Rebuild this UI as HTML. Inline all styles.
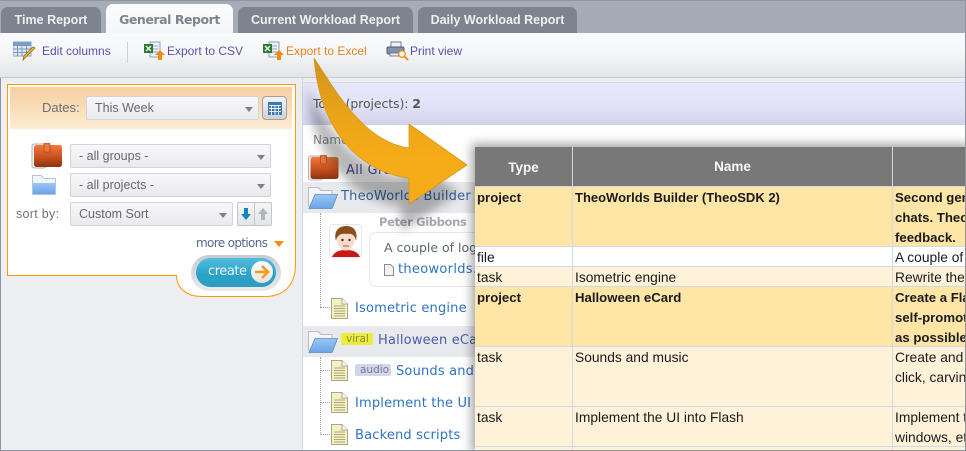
<!DOCTYPE html>
<html><head><meta charset="utf-8"><title>Report</title>
<style>
html,body{margin:0;padding:0}
body{width:966px;height:451px;overflow:hidden;position:relative;background:#eceef2;font-family:"Liberation Sans",sans-serif}
div,span.t,svg{position:absolute}
.t{position:absolute;white-space:nowrap;line-height:16px}
.tab{position:absolute;background:#7d838f;border-radius:7px 7px 0 0;top:7px;height:26px;color:#eef0f2;font:bold 12.5px/26px "Liberation Sans",sans-serif;text-align:center}
.sel{position:absolute;background:linear-gradient(#f8f8fa,#e9eaed);border:1px solid #d2d3d6;border-radius:2px;color:#66666e;font:12.5px/23px "Liberation Sans",sans-serif;box-sizing:border-box;height:24px;padding-left:8px}
.sel:after{content:"";position:absolute;right:5px;top:10px;border:4px solid transparent;border-top:5px solid #808084;border-bottom:0}
.tb{font-size:12px;color:#5a50ac}
.tr{font:13px/16px "DejaVu Sans",sans-serif;color:#2f73c0;letter-spacing:.18px}
.cell{position:absolute;font:13.8px/20px "Liberation Sans",sans-serif;color:#1a1a1a;white-space:nowrap;overflow:hidden;padding-top:1px;box-sizing:border-box}
.b{font-weight:bold;font-size:13.2px}
.c1{left:475px;width:97px;padding-left:2px}
.c2{left:573px;width:319px;padding-left:2px}
.c3{left:893px;width:72px;padding-left:2px}
.y{background:#ffe6a6}
.o{background:#fff2d9}
.w{background:#fff}
.dot{position:absolute;border-left:1px dotted #a0a0a0}
.doth{position:absolute;border-top:1px dotted #a0a0a0;height:0}
</style></head><body>

<!-- tab bar -->
<div style="left:0;top:0;width:966px;height:33px;background:#a5abb7;border-top:1px solid #8e94a0;box-sizing:border-box"></div>
<div class="tab" style="left:1px;width:100px">Time Report</div>
<div class="tab" style="left:106px;width:127px;top:4px;height:29px;background:linear-gradient(#fbfcfd,#f5f6f8);color:#80838c;font:bold 12.5px/32px 'DejaVu Sans',sans-serif;letter-spacing:-.45px">General Report</div>
<div class="tab" style="left:238px;width:175px">Current Workload Report</div>
<div class="tab" style="left:418px;width:159px">Daily Workload Report</div>

<!-- toolbar -->
<div style="left:0;top:33px;width:966px;height:45px;background:linear-gradient(#f9fafb 0,#f7f8f9 40%,#e3e4e6 100%);border-bottom:1px solid #c8c9cc;box-sizing:border-box"></div>
<div style="left:127px;top:42px;width:1px;height:21px;background:#cfd0d3"></div>
<svg style="left:13px;top:41px" width="24" height="20" viewBox="0 0 24 20"><rect x="0" y="1" width="18" height="14" fill="#dfe8f5" stroke="#8fa3c4"/><path d="M0 4.5H18M0 8H18M0 11.500H18M4.500 1V15M9 1V15M13.500 1V15" stroke="#7f96bd"/><rect x="0" y="1" width="18" height="3" fill="#7f9bc8"/><path d="M22 7L12 17L10 19L11 15L20 6Z" fill="#f2c230" stroke="#8a6a10" stroke-width=".8"/></svg>
<div class="t tb" style="left:42px;top:43px">Edit columns</div>
<svg style="left:144px;top:41px" width="22" height="20" viewBox="0 0 22 20"><rect x="6" y="1" width="10" height="15" fill="#eef2fa" stroke="#8b9fc0"/><path d="M9 5H14M9 8H14M9 11H14" stroke="#9ab"/><rect x="0" y="3" width="9" height="9" fill="#2c7a32"/><path d="M2 5L7 10M7 5L2 10" stroke="#fff" stroke-width="1.300"/><path d="M16 9L21 14H18V19H14V14H11Z" fill="#f58a0a"/></svg>
<div class="t tb" style="left:167px;top:43px">Export to CSV</div>
<svg style="left:263px;top:41px" width="22" height="20" viewBox="0 0 22 20"><rect x="6" y="1" width="10" height="15" fill="#eef2fa" stroke="#8b9fc0"/><path d="M9 5H14M9 8H14M9 11H14" stroke="#9ab"/><rect x="0" y="3" width="9" height="9" fill="#2c7a32"/><path d="M2 5L7 10M7 5L2 10" stroke="#fff" stroke-width="1.300"/><path d="M16 9L21 14H18V19H14V14H11Z" fill="#f58a0a"/></svg>
<div class="t tb" style="left:286px;top:43px;color:#e8821c">Export to Excel</div>
<svg style="left:386px;top:41px" width="24" height="20" viewBox="0 0 24 20"><rect x="5" y="1" width="10" height="5" fill="#eef1f6" stroke="#6d7f95"/><rect x="1" y="6" width="17" height="7" rx="1.500" fill="#7f92a8" stroke="#4f6075"/><rect x="4" y="12" width="11" height="3" fill="#e8ecf2" stroke="#6d7f95"/><circle cx="16" cy="13" r="3.300" fill="#fff5d8" stroke="#f08a10" stroke-width="1.200"/><path d="M18.500 15.500L22 19" stroke="#f08a10" stroke-width="1.800"/></svg>
<div class="t tb" style="left:410px;top:43px">Print view</div>

<!-- left edge & sidebar -->
<div style="left:0;top:78px;width:1px;height:373px;background:#8d93a0"></div>
<svg style="left:7px;top:84px" width="290" height="214" viewBox="0 0 290 214"><path d="M.5 .5H288.500V180C288.500 200 278 212.500 258 212.500H194C180 212.500 169.500 204 169.500 191.500H.5Z" fill="#fff" stroke="#f90"/></svg>
<div style="left:7px;top:84px;width:1px;height:192px;background:#f90"></div>
<div style="left:7px;top:275px;width:170px;height:1px;background:#f90"></div>
<div style="left:10px;top:87px;width:282px;height:42px;background:linear-gradient(#f6cfa0,#fdecd3)"></div>
<div class="t" style="left:42px;top:100px;font:13px/16px 'Liberation Sans',sans-serif;color:#6e6e72">Dates:</div>
<div class="sel" style="left:86px;top:96px;width:173px">This Week</div>
<div style="left:262px;top:96px;width:25px;height:24px;box-sizing:border-box;border:1px solid #9aa0a8;border-radius:4px;background:linear-gradient(#f3f4f6,#cfd1d5)"></div>
<svg style="left:268px;top:102px" width="14" height="13" viewBox="0 0 14 13"><rect width="14" height="13" fill="#3f78ad"/><path d="M1 3.500H13M1 6.500H13M1 9.500H13M3.500 3V13M7 3V13M10.500 3V13" stroke="#e8eef5" stroke-width="1"/></svg>

<svg style="left:31px;top:143px" width="32" height="26" viewBox="0 0 32 26"><rect x="1" y="1" width="14" height="24" rx="2" fill="#f4f4f4" stroke="#b0b0b0"/><rect x="3" y="2" width="28" height="22" rx="2.500" fill="url(#w1)"/><rect x="13" y="0" width="6" height="9" rx="1.500" fill="#e87a40" stroke="#a84818" stroke-width=".7"/><defs><linearGradient id="w1" x1="0" y1="0" x2="0" y2="1"><stop offset="0" stop-color="#f07a3c"/><stop offset=".55" stop-color="#c8501e"/><stop offset="1" stop-color="#8e3212"/></linearGradient><linearGradient id="fb" x1="0" y1="0" x2="0" y2="1"><stop offset="0" stop-color="#9cc6f4"/><stop offset="1" stop-color="#6aa4ea"/></linearGradient></defs></svg>
<div class="sel" style="left:70px;top:144px;width:201px">- all groups -</div>
<svg style="left:32px;top:174px" width="24" height="21" viewBox="0 0 24 21"><path d="M.5 20.500V1.500H9L12 4.500H23.500V20.500Z" fill="#f2f5fa" stroke="#b8c4d2"/><path d="M1 9H23V20H1Z" fill="url(#fb)"/></svg>
<div class="sel" style="left:70px;top:173px;width:201px">- all projects -</div>
<div class="t" style="left:16px;top:206px;font:12.5px/16px 'Liberation Sans',sans-serif;color:#77706e;letter-spacing:.3px">sort by:</div>
<div class="sel" style="left:70px;top:202px;width:163px">Custom Sort</div>
<div style="left:237px;top:202px;width:35px;height:24px;box-sizing:border-box;border:1px solid #c4c6ca;border-radius:2px;background:linear-gradient(#f6f6f8,#e4e5e8)"></div>
<div style="left:254px;top:203px;width:1px;height:22px;background:#c4c6ca"></div>
<svg style="left:241px;top:207px" width="28" height="14" viewBox="0 0 28 14"><path d="M3 1H7V7H10L5 13L0 7H3Z" fill="#0e86c0"/><path d="M20 13H24V7H27L22 1L17 7H20Z" fill="#b2b4b8"/></svg>
<div class="t" style="left:196px;top:235px;font:12px/16px 'DejaVu Sans',sans-serif;color:#5a6690;letter-spacing:-.65px">more options</div>
<svg style="left:274px;top:241px" width="10" height="6"><path d="M0 0H10L5 6Z" fill="#f58c10"/></svg>

<div style="left:191px;top:255px;width:90px;height:36px;border-radius:18px;background:linear-gradient(#c6cbd1,#e8eaec)"></div>
<div style="left:196px;top:258px;width:80px;height:29px;border-radius:15px;background:linear-gradient(#54bcdc,#2aa3c9 55%,#2e9cc0)"></div>
<div class="t" style="left:208px;top:264px;font:13px/16px 'DejaVu Sans',sans-serif;color:#eaf6fa;letter-spacing:-.45px">create</div>
<div style="left:251px;top:261px;width:22px;height:22px;border-radius:11px;background:linear-gradient(#fff,#e4e4e4)"></div>
<svg style="left:253px;top:263px" width="18" height="18" viewBox="0 0 18 18"><path d="M2 9H14M9 3L15 9L9 15" fill="none" stroke="#f59a18" stroke-width="2.600"/></svg>

<!-- main -->
<div style="left:302px;top:78px;width:664px;height:373px;background:#fff;border-left:1px solid #d5d7dc;box-sizing:border-box"></div>
<div style="left:303px;top:82px;width:663px;height:43px;background:linear-gradient(#e7e7fc,#e3e3f9 50%,#d3d2ea);border-top:1px solid #d8d8ea;box-sizing:border-box"></div>
<div style="left:303px;top:78px;width:663px;height:4px;background:#eceef2"></div>
<div class="t" style="left:313px;top:96px;font:12.500px/16px 'DejaVu Sans',sans-serif;color:#555;letter-spacing:-.1px">Total (projects): <b>2</b></div>
<div class="t" style="left:313px;top:132px;font:12px/16px 'DejaVu Sans',sans-serif;color:#888c96">Name</div>
<div style="left:303px;top:182px;width:663px;height:31px;background:#e7e9ec"></div>
<div style="left:303px;top:326px;width:663px;height:31px;background:#e7e9ec"></div>

<svg style="left:307px;top:155px" width="33" height="26" viewBox="0 0 32 26"><rect x="1" y="1" width="14" height="24" rx="2" fill="#f4f4f4" stroke="#b0b0b0"/><rect x="3" y="2" width="28" height="22" rx="2.500" fill="url(#w1)"/><rect x="13" y="0" width="6" height="9" rx="1.500" fill="#e87a40" stroke="#a84818" stroke-width=".7"/></svg>
<div class="t" style="left:346px;top:163px;font:13px/16px 'DejaVu Sans',sans-serif;color:#4c4ca0;letter-spacing:.3px">All Groups</div>
<svg style="left:308px;top:186px" width="30" height="23" viewBox="0 0 30 23"><path d="M.5 21V1.500H10L13 4.500H24V9" fill="#f4f6f9" stroke="#b8bcc4"/><path d="M1 22.500L7 8.500H29.500L24 22.500Z" fill="url(#fb)" stroke="#5a8cc8" stroke-width=".8"/></svg>
<div class="t tr" style="left:341px;top:189px;color:#35659f;letter-spacing:.2px">TheoWorlds Builder</div>

<div class="t" style="left:379px;top:214px;font:bold 11.500px/16px 'DejaVu Sans',sans-serif;color:#a6a8ae;letter-spacing:-.35px">Peter Gibbons</div>
<div style="left:329px;top:224px;width:33px;height:34px;border:1px solid #e4e6ea;border-radius:4px;background:#fff;box-sizing:border-box"></div>
<svg style="left:330px;top:225px" width="32" height="33" viewBox="0 0 32 33"><path d="M2 32C4 27 9 25 16 25C23 25 28 27 30 32Z" fill="#c81818"/><ellipse cx="16" cy="15" rx="8.500" ry="10.500" fill="#fadcc8"/><path d="M6 16C3 5 10 1 16 1C24 1 28 6 26 16C25 11 23 8 16 9C10 8 7 11 6 16Z" fill="#8a4e1a"/><circle cx="12.500" cy="15" r="1.200" fill="#333"/><circle cx="19.500" cy="15" r="1.200" fill="#333"/><path d="M13 21H19" stroke="#a55" stroke-width="1"/></svg>
<div style="left:369px;top:232px;width:140px;height:55px;box-sizing:border-box;border:1px solid #e4e6ea;border-radius:7px;background:#fff"></div>
<div class="t" style="left:384px;top:240px;font:12.500px/16px 'DejaVu Sans',sans-serif;color:#5f6672">A couple of logos</div>
<svg style="left:384px;top:264px" width="10" height="12" viewBox="0 0 10 12"><path d="M.5 .5H6.500L9.500 3.500V11.500H.5Z" fill="#f2f2f2" stroke="#8c8c8c"/></svg>
<div class="t" style="left:398px;top:262px;font:13px/16px 'DejaVu Sans',sans-serif;color:#2f73c0;letter-spacing:.3px">theoworlds.gif</div>

<div class="dot" style="left:320px;top:213px;height:94px"></div>
<div class="dot" style="left:320px;top:357px;height:78px"></div>
<div class="doth" style="left:320px;top:307px;width:10px"></div>
<div class="doth" style="left:320px;top:370px;width:10px"></div>
<div class="doth" style="left:320px;top:402px;width:10px"></div>
<div class="doth" style="left:320px;top:434px;width:10px"></div>

<svg width="0" height="0"><defs><g id="n"><path d="M.5 .5H11L16.500 6V20.500H.5Z" fill="#f5f1c4" stroke="#aaa986"/><path d="M3 8H14M3 10.500H14M3 13H14M3 15.500H14M3 18H14" stroke="#a8a878"/><path d="M11 .5V6H16.500" fill="#fff" stroke="#aaa986"/></g></defs></svg>
<svg style="left:331px;top:298px" width="17" height="21"><use href="#n"/></svg>
<svg style="left:331px;top:360px" width="17" height="21"><use href="#n"/></svg>
<svg style="left:331px;top:392px" width="17" height="21"><use href="#n"/></svg>
<svg style="left:331px;top:424px" width="17" height="21"><use href="#n"/></svg>
<div class="t tr" style="left:355px;top:301px">Isometric engine</div>

<svg style="left:308px;top:330px" width="30" height="23" viewBox="0 0 30 23"><path d="M.5 21V1.500H10L13 4.500H24V9" fill="#f4f6f9" stroke="#b8bcc4"/><path d="M1 22.500L7 8.500H29.500L24 22.500Z" fill="url(#fb)" stroke="#5a8cc8" stroke-width=".8"/></svg>
<div style="left:341px;top:333px;width:32px;height:12px;border-radius:2px;background:#ecec40"></div>
<div class="t" style="left:346px;top:331px;font:10.500px/16px 'DejaVu Sans',sans-serif;color:#8a8a3a">viral</div>
<div class="t tr" style="left:378px;top:333px;color:#4c5cae">Halloween eCard</div>
<div style="left:355px;top:364px;width:36px;height:12px;border-radius:2px;background:#d3d4ee"></div>
<div class="t" style="left:360px;top:362px;font:10.500px/16px 'DejaVu Sans',sans-serif;color:#7a7a8a">audio</div>
<div class="t tr" style="left:396px;top:364px">Sounds and music</div>
<div class="t tr" style="left:355px;top:396px">Implement the UI into Flash</div>
<div class="t tr" style="left:355px;top:428px">Backend scripts</div>

<!-- arrow -->
<svg style="left:290px;top:50px;overflow:visible" width="190" height="190" viewBox="290 50 190 190">
<defs><linearGradient id="ar" x1="0" y1="0" x2="0" y2="1"><stop offset="0" stop-color="#d2921c"/><stop offset=".4" stop-color="#eba418"/><stop offset=".7" stop-color="#f6ab18"/></linearGradient>
<filter id="sh" x="-30%" y="-30%" width="160%" height="170%"><feGaussianBlur stdDeviation="5"/></filter></defs>
<path d="M306 84C320 120 355 168 401 176V152L459 193L401 232V206C352 200 312 158 306 84Z" fill="#000" opacity=".28" filter="url(#sh)"/>
<path d="M314 58C338 95 365 142 409 148V124L467 165L409 204V178C360 172 320 132 314 58Z" fill="url(#ar)" stroke="#d5981e" stroke-width=".8"/>
</svg>

<!-- spreadsheet -->
<div style="left:475px;top:147px;width:491px;height:304px;background:#d0d7e5;box-shadow:0 0 10px 3px rgba(0,0,0,.38)"></div>
<div style="left:475px;top:147px;width:97px;height:39px;background:#787878"></div>
<div style="left:573px;top:147px;width:319px;height:39px;background:#787878"></div>
<div style="left:893px;top:147px;width:72px;height:39px;background:#787878"></div>
<div class="t" style="left:475px;top:160px;width:97px;text-align:center;font:bold 13.500px/16px 'Liberation Sans',sans-serif;color:#f8f8f8">Type</div>
<div class="t" style="left:573px;top:159px;width:319px;text-align:center;font:bold 13.500px/16px 'Liberation Sans',sans-serif;color:#f8f8f8">Name</div>

<div class="cell b c1 y" style="top:187px;height:59px">project</div>
<div class="cell b c2 y" style="top:187px;height:59px;font-size:13px">TheoWorlds Builder (TheoSDK 2)</div>
<div class="cell b c3 y" style="top:187px;height:59px">Second generation<br>chats. TheoWorlds<br>feedback.</div>

<div class="cell c1 w" style="top:247px;height:19px">file</div>
<div class="cell c2 w" style="top:247px;height:19px"></div>
<div class="cell c3 w" style="top:247px;height:19px">A couple of logos</div>

<div class="cell c1 o" style="top:267px;height:19px">task</div>
<div class="cell c2 o" style="top:267px;height:19px">Isometric engine</div>
<div class="cell c3 o" style="top:267px;height:19px">Rewrite the engine</div>

<div class="cell b c1 y" style="top:287px;height:59px">project</div>
<div class="cell b c2 y" style="top:287px;height:59px">Halloween eCard</div>
<div class="cell b c3 y" style="top:287px;height:59px">Create a Flash<br>self-promotional<br>as possible.</div>

<div class="cell c1 o" style="top:347px;height:59px">task</div>
<div class="cell c2 o" style="top:347px;height:59px">Sounds and music</div>
<div class="cell c3 o" style="top:347px;height:59px">Create and add<br>click, carving</div>

<div class="cell c1 o" style="top:407px;height:39px">task</div>
<div class="cell c2 o" style="top:407px;height:39px">Implement the UI into Flash</div>
<div class="cell c3 o" style="top:407px;height:39px">Implement the<br>windows, etc</div>

<div class="cell c1 o" style="top:447px;height:3px"></div>
<div class="cell c2 o" style="top:447px;height:3px"></div>
<div class="cell c3 o" style="top:447px;height:3px"></div>

<div style="left:0;top:450px;width:966px;height:1px;background:#8d93a0"></div>
<div style="left:965px;top:0;width:1px;height:451px;background:#8d93a0"></div>
</body></html>
